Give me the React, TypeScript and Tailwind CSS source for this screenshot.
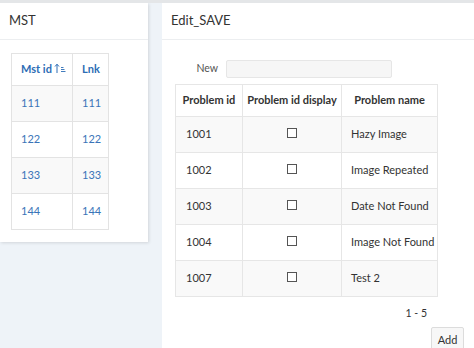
import React from "react";

const font = { fontFamily: 'Lato, "Open Sans", sans-serif' };

const leftRows = ["111", "122", "133", "144"];
const rightRows = [
  ["1001", "Hazy Image"],
  ["1002", "Image Repeated"],
  ["1003", "Date Not Found"],
  ["1004", "Image Not Found"],
  ["1007", "Test 2"],
];

function SortIcon() {
  return (
    <svg width="12" height="11" viewBox="0 0 12 11" className="inline-block ml-[2px] -mt-[3px]">
      <path d="M3 10V1.5M1 3.5L3 1.2L5 3.5" stroke="#2d6db5" strokeWidth="1" fill="none" />
      <path d="M7 4.5h2.5M7 6.5h3.5M7 8.5h4.5" stroke="#2d6db5" strokeWidth="0.9" />
    </svg>
  );
}

export default function App() {
  return (
    <div
      className="w-[474px] h-[348px] overflow-hidden bg-[#eef3f8] border-t-[3px] border-[#e4e6e8] flex items-start gap-[14px] text-[#333]"
      style={font}
    >
      <div className="w-[148px] bg-white shadow-[1px_1px_3px_rgba(0,0,0,0.12)] pb-[12px]">
        <div className="h-[37px] border-b border-[#eceef0] pl-[9px] flex items-center text-[13px]">MST</div>
        <div className="pl-[11px] pt-[13px]">
          <table className="border-collapse text-[11px] whitespace-nowrap">
            <thead>
              <tr className="h-[32px]">
                <th className="w-[61px] border border-[#e3e3e3] text-left pl-[9px] font-bold text-[#2d6db5]">
                  Mst id<SortIcon />
                </th>
                <th className="w-[36px] border border-[#e3e3e3] text-left pl-[9px] font-bold text-[#2d6db5]">Lnk</th>
              </tr>
            </thead>
            <tbody>
              {leftRows.map((r, i) => (
                <tr key={r} className={i % 2 === 0 ? "h-[36px] bg-[#f9f9f9]" : "h-[36px] bg-white"}>
                  <td className="border border-[#e3e3e3] pl-[9px] text-[#3a74b8]">{r}</td>
                  <td className="border border-[#e3e3e3] pl-[9px] text-[#3a74b8]">{r}</td>
                </tr>
              ))}
            </tbody>
          </table>
        </div>
      </div>
      <div className="flex-1 h-[345px] bg-white">
        <div className="h-[37px] border-b border-[#eceef0] pl-[9px] flex items-center text-[13px]">Edit_SAVE</div>
        <div className="flex items-center mt-[20px] h-[17px]">
          <div className="w-[64px] text-right pr-[8px] text-[10.5px] text-[#555]">New</div>
          <div className="w-[166px] h-[18px] bg-[#f6f6f6] border border-[#e6e6e6] rounded-[2px]"></div>
        </div>
        <div className="pl-[13px] mt-[7px]">
          <table className="border-collapse text-[11px] whitespace-nowrap table-fixed w-[262px]">
            <thead>
              <tr className="h-[32px]">
                <th className="w-[67px] border border-[#e6e6e6] font-bold text-center">Problem id</th>
                <th className="w-[99px] border border-[#e6e6e6] font-bold text-center">Problem id display</th>
                <th className="w-[96px] border border-[#e6e6e6] font-bold text-center">Problem name</th>
              </tr>
            </thead>
            <tbody>
              {rightRows.map(([id, name], i) => (
                <tr key={id} className={i % 2 === 0 ? "h-[36px] bg-[#f9f9f9]" : "h-[36px] bg-white"}>
                  <td className="border border-[#e6e6e6] pl-[10px]">{id}</td>
                  <td className="border border-[#e6e6e6]">
                    <div className="flex justify-center -mt-[4px]">
                      <div className="w-[10px] h-[10px] border border-[#555] bg-white"></div>
                    </div>
                  </td>
                  <td className="border border-[#e6e6e6] pl-[9px]">{name}</td>
                </tr>
              ))}
            </tbody>
          </table>
          <div className="w-[262px] text-right text-[10.5px] mt-[9px] pr-[10px]">1 - 5</div>
          <div className="flex justify-end w-[289px] mt-[5px]">
            <div className="w-[33px] h-[26px] border border-[#dcdcdc] rounded-[2px] bg-[#f7f7f7] flex items-center justify-center text-[11px]">
              Add
            </div>
          </div>
        </div>
      </div>
    </div>
  );
}
